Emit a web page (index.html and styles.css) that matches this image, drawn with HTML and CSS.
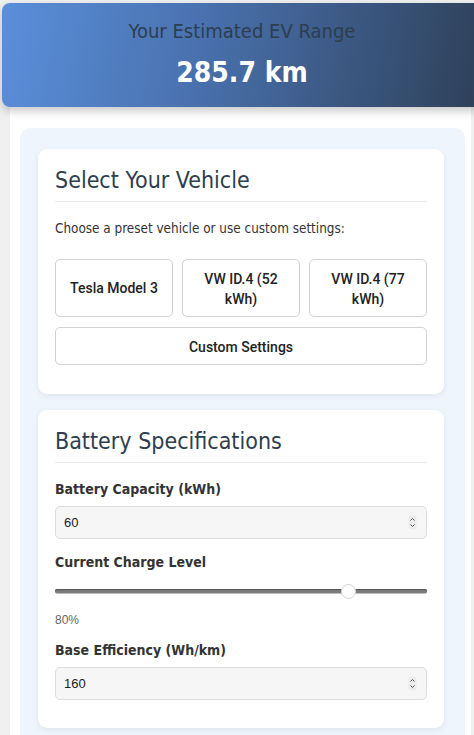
FILE: index.html
```html
<!DOCTYPE html>
<html lang="en">
<head>
<meta charset="utf-8">
<title>EV Range Estimator</title>
<link rel="stylesheet" href="styles.css">
</head>
<body>
<header class="range-header">
  <h3 class="range-title">Your Estimated EV Range</h3>
  <div class="range-value">285.7 km</div>
</header>
<main class="container">
  <div class="panel">
    <section class="card">
      <h2 class="card-title">Select Your Vehicle</h2>
      <p class="card-text">Choose a preset vehicle or use custom settings:</p>
      <div class="vehicle-grid">
        <button class="vehicle-btn">Tesla Model 3</button>
        <button class="vehicle-btn">VW ID.4 (52 kWh)</button>
        <button class="vehicle-btn">VW ID.4 (77 kWh)</button>
        <button class="vehicle-btn vehicle-btn-wide">Custom Settings</button>
      </div>
    </section>
    <section class="card">
      <h2 class="card-title">Battery Specifications</h2>
      <div class="form-group">
        <label class="field-label" for="cap">Battery Capacity (kWh)</label>
        <div class="number-field">
          <input id="cap" class="number-input" type="number" value="60">
          <svg class="spinner" width="9" height="15" viewBox="0 0 9 15"><rect x="0.5" y="0.5" width="8" height="14" rx="3" fill="#ececec"/><path d="M2.5 5.5 L4.5 3.5 L6.5 5.5" fill="none" stroke="#555" stroke-width="1"/><path d="M2.5 9.5 L4.5 11.5 L6.5 9.5" fill="none" stroke="#555" stroke-width="1"/></svg>
        </div>
      </div>
      <div class="form-group">
        <label class="field-label" for="charge">Current Charge Level</label>
        <input id="charge" class="range-input" type="range" min="0" max="100" value="80">
        <div class="range-readout">80%</div>
      </div>
      <div class="form-group">
        <label class="field-label" for="eff">Base Efficiency (Wh/km)</label>
        <div class="number-field">
          <input id="eff" class="number-input" type="number" value="160">
          <svg class="spinner" width="9" height="15" viewBox="0 0 9 15"><rect x="0.5" y="0.5" width="8" height="14" rx="3" fill="#ececec"/><path d="M2.5 5.5 L4.5 3.5 L6.5 5.5" fill="none" stroke="#555" stroke-width="1"/><path d="M2.5 9.5 L4.5 11.5 L6.5 9.5" fill="none" stroke="#555" stroke-width="1"/></svg>
        </div>
      </div>
    </section>
  </div>
</main>
</body>
</html>
```
FILE: styles.css
```css
* { box-sizing: border-box; }
html, body { margin: 0; padding: 0; }
body {
  background: #f0f0f1;
  font-family: "DejaVu Sans Condensed", "DejaVu Sans", sans-serif;
  font-stretch: condensed;
  color: #333;
  padding-top: 3px;
  overflow: hidden;
}
.range-header {
  position: relative;
  z-index: 2;
  margin: 0 -8px 0 2px;
  padding: 16px 10px 17px;
  border-radius: 8px;
  background: linear-gradient(100deg, #5a8fda 0%, #4a72b0 40%, #2e4058 100%);
  box-shadow: 0 4px 10px rgba(0, 0, 0, 0.22);
  text-align: center;
}
.range-title {
  margin: 0;
  font-size: 20px;
  line-height: 24px;
  font-weight: normal;
  color: #2c3e50;
}
.range-value {
  margin-top: 13px;
  font-size: 28px;
  line-height: 34px;
  font-weight: bold;
  color: #fff;
}
.container {
  margin: 0 3px 0 10px;
  background: #fff;
  padding: 21px 6px 0 10px;
  min-height: 640px;
}
.panel {
  background: #eff5fc;
  padding: 21px 21px 20px 18px;
  border-radius: 10px 10px 0 0;
  min-height: 620px;
}
.card {
  background: #fff;
  border-radius: 9px;
  box-shadow: 0 2px 6px rgba(0, 0, 0, 0.07);
  padding: 17px 17px 20px;
  margin-bottom: 16px;
}
.card-title {
  margin: 0 0 18px;
  padding-bottom: 6px;
  border-bottom: 1px solid #ececec;
  font-size: 23px;
  line-height: 29px;
  font-weight: normal;
  color: #2c3e50;
}
.card-text {
  margin: 0 0 22px;
  font-size: 13.4px;
  line-height: 17px;
  color: #333;
}
.vehicle-grid {
  display: grid;
  grid-template-columns: repeat(3, 1fr);
  column-gap: 9px;
  row-gap: 10px;
  margin-bottom: 9px;
}
.vehicle-btn {
  height: 58px;
  padding: 9px 11px;
  background: #fff;
  border: 1px solid #d2d2d2;
  border-radius: 5px;
  font-family: Roboto, "Liberation Sans", sans-serif;
  font-size: 14px;
  line-height: 20px;
  font-weight: 500;
  color: #222;
}
.vehicle-btn-wide {
  grid-column: 1 / -1;
  height: 38px;
}
.form-group { margin-bottom: 15px; }
.form-group:last-child { margin-bottom: 8px; }
.field-label {
  display: block;
  margin-bottom: 8px;
  font-size: 14px;
  line-height: 17px;
  font-weight: bold;
  color: #333;
}
.number-field {
  display: flex;
  align-items: center;
  height: 33px;
  background: #f6f6f6;
  border: 1px solid #dcdcdc;
  border-radius: 5px;
  padding: 0 9px 0 8px;
}
.number-input {
  flex: 1;
  min-width: 0;
  border: none;
  background: transparent;
  outline: none;
  padding: 0;
  font-family: "Liberation Sans", Arial, sans-serif;
  font-size: 13px;
  color: #222;
  -moz-appearance: textfield;
}
.number-input::-webkit-outer-spin-button,
.number-input::-webkit-inner-spin-button { -webkit-appearance: none; margin: 0; }
.spinner { flex: none; display: block; }
.range-input {
  -webkit-appearance: none;
  appearance: none;
  display: block;
  width: 100%;
  height: 24px;
  margin: 0;
  background: transparent;
}
.range-input::-webkit-slider-runnable-track {
  height: 4px;
  border-radius: 2px;
  background: #7c7c7c;
  box-shadow: inset 0 1px 1px #555, 0 1px 0 #bdbdbd;
}
.range-input::-webkit-slider-thumb {
  -webkit-appearance: none;
  width: 15px;
  height: 15px;
  margin-top: -5.5px;
  border-radius: 50%;
  background: #fff;
  border: 1px solid #d4d4d4;
}
.range-readout {
  margin-top: 10px;
  font-family: "Liberation Sans", Arial, sans-serif;
  font-size: 12px;
  line-height: 14px;
  color: #666;
}
```
